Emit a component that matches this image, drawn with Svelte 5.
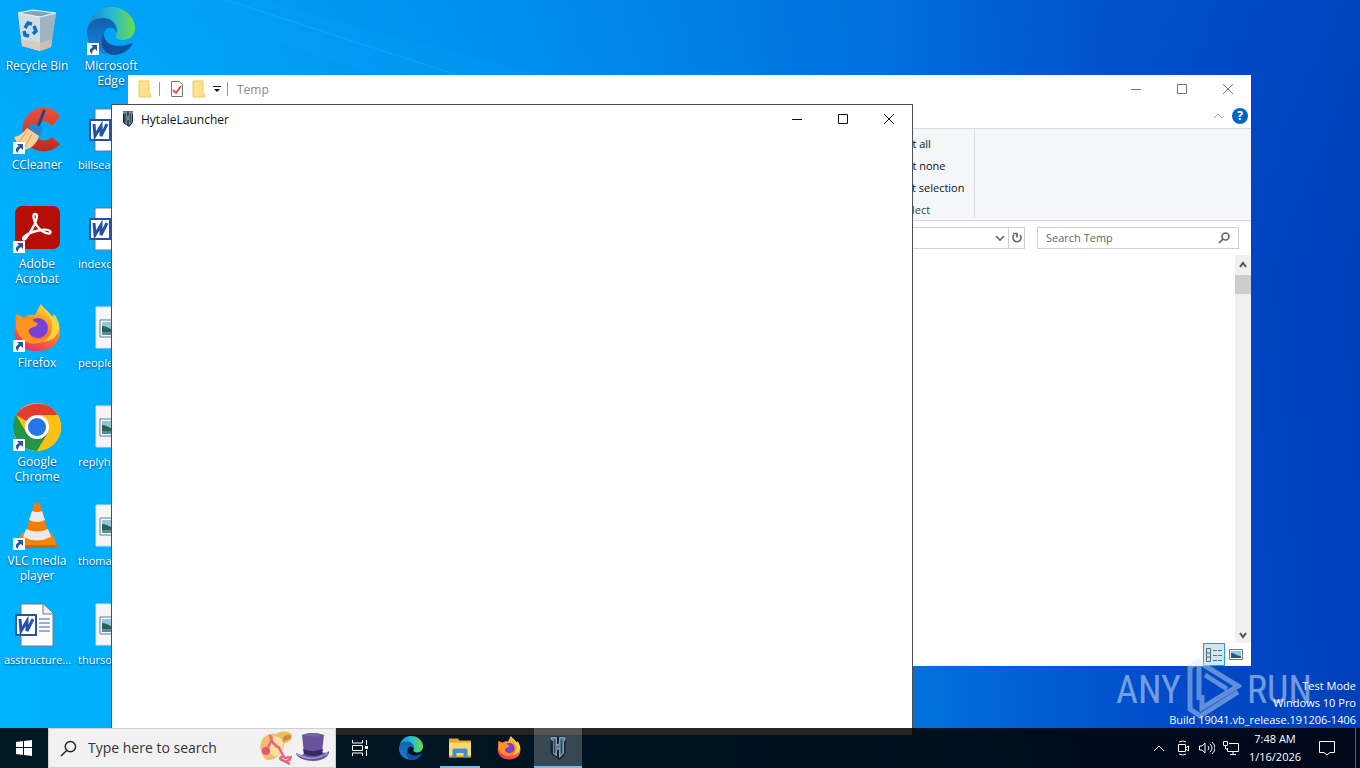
<script>
	const icons = [
		{ name: 'Recycle Bin', kind: 'bin' },
		{ name: 'CCleaner', kind: 'ccleaner', shortcut: true },
		{ name: 'Adobe Acrobat', kind: 'acrobat', shortcut: true },
		{ name: 'Firefox', kind: 'firefox', shortcut: true },
		{ name: 'Google Chrome', kind: 'chrome', shortcut: true },
		{ name: 'VLC media player', kind: 'vlc', shortcut: true },
		{ name: 'asstructure...', kind: 'word', file: true },
		{ name: 'Microsoft Edge', kind: 'edge', shortcut: true },
		{ name: 'billsea', kind: 'word', file: true },
		{ name: 'indexc', kind: 'word', file: true },
		{ name: 'people', kind: 'image', file: true },
		{ name: 'replyh', kind: 'image', file: true },
		{ name: 'thoma', kind: 'image', file: true },
		{ name: 'thurso', kind: 'image', file: true }
	]

	const tasks = [
		{ name: 'Microsoft Edge', kind: 'edge' },
		{ name: 'File Explorer', kind: 'explorer', open: true },
		{ name: 'Firefox', kind: 'firefox' },
		{ name: 'HytaleLauncher', kind: 'hytale', open: true, active: true }
	]

	let query = $state('')
	let folderQuery = $state('')
</script>

{#snippet art(kind)}
	<svg class="art" viewBox="0 0 48 48" aria-hidden="true">
		{#if kind === 'bin'}
			<path d="M5 6 20 3 43 6 38 40 27 44 9 39z" fill="#a9cde0" />
			<path d="M5 6 27 10 27 44 9 39z" fill="#cfdde6" />
			<path d="M27 10 43 6 38 40 27 44z" fill="#9fb4c1" />
			<path d="M5 6 20 3 43 6 27 10z" fill="#7fa5bb" stroke="#edf6fa" stroke-width="1.2" />
			<path d="M8 32 27 36 39 32 38 40 27 44 9 39z" fill="#dcc3b2" opacity=".7" />
			<g fill="none" stroke="#0c72c4" stroke-width="3.5">
				<path d="m12 21 3-5 4 1" />
				<path d="m21 19 2 5-3 3" />
				<path d="m16 29-4-1-1-4" />
			</g>
		{:else if kind === 'edge'}
			<path d="M1 21C3 8 12 0 24 0c14 0 24 10 24 21 0 7-5 12-12 12-5 0-8-2-7-5 3-5-1-12-8-14C13 11 5 15 1 21z" fill="url(#edge-top)" />
			<path d="M0 25c0-10 8-14 16-14 9 0 15 7 14 15-3-7-11-7-13 0-2 8 4 17 16 20C19 51 0 43 0 25z" fill="url(#edge-left)" />
			<path d="M17 26c-1 11 12 17 28 10 1 0 1 1 0 2-4 6-11 10-19 10-12-2-14-14-9-22z" fill="#12509f" />
		{:else if kind === 'ccleaner'}
			<path d="M47 11 39 20c-5-6-12-6-15 0-4 7-1 13 4 14 5 1 8 0 11-3l8 7C39 47 24 48 15 39 5 28 9 9 23 3c9-4 19-1 24 8z" fill="url(#cc-red)" />
			<path d="m25 21 6-16" stroke="#174d87" stroke-width="3" stroke-linecap="round" />
			<path d="m15 21 4-4 10 4-1 7-3 4z" fill="#2d82c8" />
			<path d="M14 22 26 30c-3 10-10 14-18 14L1 31c6-1 9-4 13-9z" fill="#f5d199" />
			<path d="M14 25 6 36M19 28l-7 13" stroke="#d3a05f" />
		{:else if kind === 'acrobat'}
			<rect x="2" y="1" width="45" height="43" rx="7" fill="#b60d05" />
			<path d="M22 9c-4 0 0 12 7 17 6 4 10 3 8 0-3-3-19 0-25 5-4 3-1 5 1 2 5-6 11-17 11-22 0-1-1-2-2-2z" fill="none" stroke="#fff" stroke-width="2.3" />
		{:else if kind === 'firefox'}
			<path d="M3 10c3 1 5 2 7 4 4-3 8-4 12-3 2-3 3-7 6-11 2 5 7 6 10 11 9 7 11 17 7 25-4 8-12 11-21 11C9 47-1 36 2 22c1-4 0-7 1-12z" fill="url(#fox)" />
			<circle cx="25" cy="24" r="10" fill="#7541d9" />
			<path d="M4 11c3 0 6 2 8 4 3-2 7 0 10 3 4 1 3 4-1 5-5 1-7 4-4 8 4 6 13 5 18 1-4 9-24 13-31-5-2-6-1-11 0-16z" fill="#ff9420" />
			<path d="M28 0c2 8 10 10 11 20 1 9-4 15-9 18 14-1 20-14 14-23-1-3-2-4-4-5 0 2 0 3-1 4-3-7-9-9-11-14z" fill="#ffdf3d" opacity=".85" />
		{:else if kind === 'chrome'}
			<circle cx="24" cy="24" r="24" fill="#fbc116" />
			<path d="M24 24 3 12C11-1 36-5 45 13z" fill="#e33b2e" />
			<path d="M3 12C-5 27 4 47 24 48l11-18-22-1z" fill="#249447" />
			<path d="M24 12h21a24 24 0 0 1-21 36l11-18z" fill="#fbc116" />
			<circle cx="24" cy="24" r="12" fill="#fff" />
			<circle cx="24" cy="24" r="9" fill="#2375e8" />
		{:else if kind === 'vlc'}
			<path d="M9 31h30l5 13q0 2-3 2H4q-3 0-1-3z" fill="#f58700" />
			<path d="M3 43h41v3H3z" fill="#cd6500" />
			<path d="M21 2q3-3 6 0l10 35q-13 7-26 0z" fill="#f47b05" />
			<path d="m19 9-3 9q8 4 16 0l-3-9q-5 2-10 0zM13 27l-3 8q14 7 28 0l-3-8q-11 5-22 0z" fill="#eceae8" />
		{:else if kind === 'word'}
			<path d="M8 3h22l10 9v33H8z" fill="#fff" stroke="#777" />
			<path d="M30 3v10h10" fill="#eee" stroke="#777" />
			<path d="M26 18h11M26 22h11M26 26h11M26 30h11" stroke="#2863b7" />
			<path d="M3 14h20v20H3z" fill="#fff" stroke="#2452a9" stroke-width="2" />
			<path d="m7 18 1 12 6-10v10l6-12" fill="none" stroke="#2452a9" stroke-width="3" />
		{:else if kind === 'image'}
			<path d="M9 3h32v41H9z" fill="#f5f5f5" stroke="#dedede" />
			<path d="M13 16h24v17H13z" fill="#fff" stroke="#547b9a" />
			<path d="M15 18h20v13H15z" fill="#91c6df" />
			<path d="M15 22c6 0 8 5 20 5v4H15z" fill="#315f51" />
			<path d="M15 28h20v3H15z" fill="#548da6" />
		{:else if kind === 'explorer'}
			<path d="M2 5h18l3 4h23v34H2z" fill="#e5a72c" />
			<path d="M2 13h44v26H2z" fill="#ffd969" />
			<path d="M9 43V28q0-3 3-3h24q3 0 3 3v15h-8v-9H17v9z" fill="#3d91cc" />
		{:else if kind === 'hytale'}
			<path d="M9 1h30v32l-4 7-8 8-7-5-8-5-3-5z" fill="#142333" />
			<path d="M10 3h11v15l6-3V3h11v5l-3 3v23l-8 9V25l-6 3v12l-6-5V10l-5-3z" fill="#66829a" stroke="#a5bac7" stroke-width="1.5" />
			<path d="M17 7v27M31 7v28" stroke="#2f485e" stroke-width="3" />
		{/if}
	</svg>
{/snippet}

{#snippet controls()}
	<div class="controls">
		<button aria-label="Minimize"><svg viewBox="0 0 12 12"><path d="M1 6.5h10" /></svg></button>
		<button aria-label="Maximize"><svg viewBox="0 0 12 12"><path d="M1.5 1.5h9v9h-9z" /></svg></button>
		<button aria-label="Close"><svg viewBox="0 0 12 12"><path d="m1 1 10 10M11 1 1 11" /></svg></button>
	</div>
{/snippet}

<svg class="defs" aria-hidden="true">
	<defs>
		<linearGradient id="edge-top"><stop stop-color="#1788cf" /><stop offset=".5" stop-color="#28b9d2" /><stop offset="1" stop-color="#6cdc47" /></linearGradient>
		<linearGradient id="edge-left" x2="0" y2="1"><stop stop-color="#125fae" /><stop offset="1" stop-color="#1785dc" /></linearGradient>
		<linearGradient id="fox" x1=".8" y1="0" x2=".3" y2="1"><stop stop-color="#ffe23e" /><stop offset=".45" stop-color="#ff8a22" /><stop offset="1" stop-color="#f02b67" /></linearGradient>
		<linearGradient id="cc-red" x2="0" y2="1"><stop stop-color="#ed5139" /><stop offset="1" stop-color="#bd2a1f" /></linearGradient>
	</defs>
</svg>

<div class="screen">
	<svg class="ray" viewBox="0 0 500 100" aria-hidden="true"><path d="M0-30 500 100H300L0-8z" fill="#08a8ff" opacity=".16" /><path d="m0-28 320 104" stroke="#4bc5ff" opacity=".25" /></svg>

	<main class="desktop">
		<div class="icons">
			{#each icons as icon}
				<button class="icon" class:file={icon.file}>
					<span class="picture">
						{@render art(icon.kind)}
						{#if icon.shortcut}
							<svg class="arrow" viewBox="0 0 12 12" aria-hidden="true"><path d="M0 0h12v12H0z" fill="#fff" /><path d="M4 2h6v6L8 6c-2 1-3 2-3 5-3-2-3-5 1-7z" fill="#26569b" /></svg>
						{/if}
					</span>
					<span class="label">{icon.name}</span>
				</button>
			{/each}
		</div>

		<section class="window explorer" aria-label="Temp">
			<header class="titlebar">
				<div class="quick">
					<svg class="folder" viewBox="0 0 16 18"><path d="M2 1h10v12l2 2v2H2z" fill="#ffe28a" stroke="#ecc960" /></svg>
					<i></i>
					<svg class="check" viewBox="0 0 16 18"><path d="M2.5 1.5h8l3 3v12h-11z" fill="#fff" stroke="#777" /><path d="m4 10 3 3 5-7" fill="none" stroke="#d75b42" stroke-width="2" /></svg>
					<svg class="folder" viewBox="0 0 16 18"><path d="M2 1h10v12l2 2v2H2z" fill="#ffe28a" stroke="#ecc960" /></svg>
					<svg class="drop" viewBox="0 0 8 8"><path d="M0 1.5h8" stroke="#111" /><path d="M1 4h6L4 7z" fill="#111" /></svg>
					<i></i>
					<span>Temp</span>
				</div>
				{@render controls()}
			</header>
			<div class="tabs">
				<svg class="collapse" viewBox="0 0 10 8"><path d="m1 6 4-4 4 4" /></svg>
				<button class="help" aria-label="Help">?</button>
			</div>
			<div class="ribbon">
				<div class="group">
					<button>Select all</button>
					<button>Select none</button>
					<button>Invert selection</button>
					<span>Select</span>
				</div>
			</div>
			<div class="address">
				<div class="path">
					<button aria-label="Previous locations"><svg viewBox="0 0 12 12"><path d="m2 4 4 4 4-4" /></svg></button>
					<button class="refresh" aria-label="Refresh"><svg viewBox="0 0 12 12"><path d="M9 3a4 4 0 1 1-6 0M2 1.5h4v4" /></svg></button>
				</div>
				<label class="find">
					<input type="text" placeholder="Search Temp" aria-label="Search Temp" bind:value={folderQuery} />
					<svg viewBox="0 0 12 12"><circle cx="7.5" cy="4.5" r="3.5" /><path d="M5 7 1 11" /></svg>
				</label>
			</div>
			<div class="files">
				<div class="scroll">
					<svg viewBox="0 0 10 8"><path d="m2 6 3-4 3 4" /></svg>
					<b></b>
					<svg viewBox="0 0 10 8"><path d="m2 2 3 4 3-4" /></svg>
				</div>
			</div>
			<footer class="views">
				<button class="on" aria-label="Details"><svg viewBox="0 0 18 16"><path d="M1.5 1.5h4v13h-4zM1.5 6h4M1.5 10h4M8 3.5h4M13 3.5h4M8 8.5h4M13 8.5h4M8 13.5h4M13 13.5h4" fill="none" stroke="#5b6770" /></svg></button>
				<button aria-label="Large icons"><svg viewBox="0 0 18 16"><path d="M2.5 2.5h13v10h-13z" fill="#fff" stroke="#777" /><path d="M4 4h10v7H4z" fill="#8ccbe8" /><path d="M4 6c4 0 5 3 10 3v2H4z" fill="#28577a" /></svg></button>
			</footer>
		</section>

		<section class="window launcher" aria-label="HytaleLauncher">
			<header class="titlebar">
				<div class="name">{@render art('hytale')}<span>HytaleLauncher</span></div>
				{@render controls()}
			</header>
		</section>

		<div class="build">
			<p>Test Mode</p>
			<p>Windows 10 Pro</p>
			<p>Build 19041.vb_release.191206-1406</p>
		</div>

		<div class="watermark">
			<span>ANY</span>
			<svg viewBox="0 0 56 64" aria-hidden="true"><path d="M11 5 4 9v42l10 7 38-24M13 42V4l39 24-36 22V37M19 17l22 14" /></svg>
			<span>RUN</span>
		</div>
	</main>

	<footer class="taskbar">
		<button class="start" aria-label="Start"><svg viewBox="0 0 16 16"><path d="m0 2 7-1v6H0zM8 1l8-1v7H8zM0 8h7v7l-7-1zM8 8h8v8l-8-1z" fill="#fff" /></svg></button>
		<label class="search">
			<svg class="lens" viewBox="0 0 18 18"><circle cx="11" cy="7" r="5.5" /><path d="m7 11-6 6" /></svg>
			<input type="text" placeholder="Type here to search" aria-label="Type here to search" bind:value={query} />
			<svg class="hats" viewBox="0 0 72 34" aria-hidden="true">
				<path d="M3 23C-2 12 5 1 17 3c5-4 17-3 16 3-1 5-5 5-8 7 0 9-9 17-17 16-2-1-4-3-5-6z" fill="#edbd69" />
				<path d="M9 14C10 4 18 3 23 9c3 4 1 12-6 17-5-1-8-5-8-12z" fill="#ffdfa0" />
				<path d="M24 7c2-4 8-4 8-1-2 4-6 3-8 5z" fill="#c98d3e" />
				<path d="M11 4c1 7 5 11 10 13M13 6c-1 5-3 9-5 12M20 17l5 9M25 26c-4-1-5 2-2 3l8 4M25 27l8-1M26 31l6-3" fill="none" stroke="#e8667c" stroke-width="2.5" />
				<circle cx="7" cy="20" r="4" fill="#e95568" />
				<path d="M37 22c4 3 8 2 8 0L43 4q10-4 22 0l-2 17c3 2 6 0 7-1 1 4-5 10-16 10-9 0-17-4-17-8z" fill="#68529c" />
				<path d="M43 4q10-4 22 0-10 3-22 0z" fill="#7563a2" />
				<path d="m44 18 1 5q10 4 18 0l1-5q-10 4-20 0z" fill="#352b62" />
				<path d="M38 23q16 9 31-1" fill="none" stroke="#aa98d0" stroke-width="1.5" />
			</svg>
		</label>
		<div class="tasks">
			<button class="overview" aria-label="Task View"><svg class="view" viewBox="0 0 18 18"><path d="M1.5 1v3h10V1M1.5 17v-3h10v3M1.5 6.5h10v5h-10zM15.5 1v5M15.5 11v6" fill="none" stroke="#fff" /><path d="M14 7h3v3h-3z" fill="#fff" /></svg></button>
			{#each tasks as task}
				<button class:open={task.open} class:active={task.active} aria-label={task.name}>{@render art(task.kind)}</button>
			{/each}
		</div>
		<div class="tray">
			<button aria-label="Show hidden icons"><svg viewBox="0 0 16 16"><path d="m3 11 5-5 5 5" /></svg></button>
			<button aria-label="Meet Now"><svg viewBox="0 0 16 16"><path d="M3.5 4.5h7v7h-7zM10.5 8l3-2v5l-3-2M4 2q4-2 7 0M4 14q4 2 7 0" /></svg></button>
			<button aria-label="Speakers"><svg viewBox="0 0 16 16"><path d="M.5 6H3l3-3v10l-3-3H.5zM9 6q2 2 0 4M11 4q4 4 0 8M13 2q6 6 0 12" /></svg></button>
			<button aria-label="Network"><svg viewBox="0 0 16 16"><path d="M6 3.5h9.5v8H4.5V8M10 12v3M7 14.5h6M.5 1.5h4v4h-4zM2.5 6v3h2" /></svg></button>
			<time class="clock"><span>7:48 AM</span><span>1/16/2026</span></time>
			<button class="notes" aria-label="Notifications"><svg viewBox="0 0 16 16"><path d="M.5 1.5h15v11H11L8 15l-3-2.5H.5z" /></svg></button>
			<button class="peek" aria-label="Show desktop"></button>
		</div>
	</footer>
</div>

<style>
	:global(body) {
		margin: 0;
	}

	.screen {
		position: relative;
		display: flex;
		flex-direction: column;
		min-height: 100vh;
		overflow: hidden;
		font: 12px/15px 'Open Sans', 'Noto Sans', sans-serif;
		color: #111;
		background:
			linear-gradient(180deg, rgba(0, 110, 220, .16), transparent 35%),
			linear-gradient(86deg, #00b4ff 0%, #00a9fb 18%, #008eec 45%, #0070dc 66%, #004cca 82%, #003db8 100%);
	}

	button {
		display: flex;
		align-items: center;
		justify-content: center;
		padding: 0;
		border: 0;
		background: none;
		color: inherit;
		font: inherit;
	}

	input {
		min-width: 0;
		height: 20px;
		flex: 1;
		padding: 0;
		border: 0;
		outline: 0;
		background: none;
		font: inherit;
		line-height: 20px;
	}

	svg {
		display: block;
		flex: none;
	}

	.defs {
		position: absolute;
		width: 0;
		height: 0;
	}

	.ray {
		position: absolute;
		top: 0;
		left: 140px;
		width: 500px;
	}

	.desktop {
		position: relative;
		flex: 1;
	}

	.icons {
		display: grid;
		grid-auto-flow: column;
		grid-template-rows: repeat(7, 99px);
		grid-auto-columns: 74px;
		justify-content: start;
		padding-top: 7px;
	}

	.icon {
		flex-direction: column;
		justify-content: flex-start;
		gap: 3px;
		color: #fff;
		text-shadow: 0 1px 2px rgba(0, 30, 70, .8);
	}

	.file .label {
		align-self: flex-start;
		margin-left: 4px;
		font-size: 11px;
	}

	.picture {
		position: relative;
		width: 48px;
		height: 48px;
	}

	.art {
		width: 100%;
		height: 100%;
	}

	.arrow {
		position: absolute;
		left: 0;
		bottom: 0;
		width: 12px;
		height: 12px;
	}

	.window {
		position: absolute;
		display: flex;
		flex-direction: column;
		background: #fff;
	}

	.explorer {
		left: 128px;
		top: 75px;
		width: 1123px;
		height: 591px;
	}

	.launcher {
		left: 111px;
		top: 104px;
		width: 800px;
		height: 630px;
		border: 1px solid #4b4f52;
	}

	.titlebar {
		display: flex;
		justify-content: space-between;
		height: 28px;
	}

	.controls {
		display: flex;
	}

	.controls button {
		width: 46px;
	}

	.controls svg {
		width: 12px;
		height: 12px;
		fill: none;
		stroke: #111;
	}

	.explorer .controls svg {
		stroke: #777;
	}

	.name {
		display: flex;
		align-items: center;
		gap: 5px;
		padding-left: 8px;
	}

	.name .art {
		width: 16px;
		height: 16px;
	}

	.quick {
		display: flex;
		align-items: center;
		gap: 6px;
		padding-left: 9px;
		color: #888;
	}

	.quick i {
		width: 1px;
		height: 14px;
		margin-right: 3px;
		background: #999;
	}

	.folder,
	.check {
		width: 16px;
		height: 18px;
	}

	.drop {
		width: 8px;
		height: 8px;
	}

	.tabs {
		display: flex;
		align-items: center;
		justify-content: flex-end;
		gap: 9px;
		height: 25px;
		padding-right: 3px;
		border-bottom: 1px solid #d8dadc;
	}

	.collapse {
		width: 10px;
		height: 8px;
		fill: none;
		stroke: #999;
	}

	.help {
		width: 16px;
		height: 16px;
		border-radius: 50%;
		background: #0067c0;
		color: #fff;
		font-weight: 700;
	}

	.ribbon {
		height: 91px;
		border-bottom: 1px solid #d8dadc;
		background: #f4f6f9;
	}

	.group {
		box-sizing: border-box;
		display: flex;
		flex-direction: column;
		align-items: flex-start;
		gap: 7px;
		width: 847px;
		height: 89px;
		padding: 7px 0 0 728px;
		border-right: 1px solid #dcdee0;
		font-size: 11px;
		white-space: nowrap;
	}

	.group button {
		padding-left: 30px;
	}

	.group span {
		align-self: center;
		color: #444;
	}

	.address {
		display: flex;
		gap: 12px;
		padding: 6px 12px;
		color: #666;
		font-size: 11px;
	}

	.path {
		flex: 1;
		display: flex;
		justify-content: flex-end;
		border: 1px solid #d0d0d0;
	}

	.path button {
		width: 16px;
	}

	.address svg {
		width: 12px;
		height: 12px;
		fill: none;
		stroke: #666;
		stroke-width: 1.7;
	}

	.path .refresh {
		border-left: 1px solid #d0d0d0;
	}

	.find {
		box-sizing: border-box;
		display: flex;
		align-items: center;
		width: 202px;
		height: 22px;
		padding: 0 8px;
		border: 1px solid #d0d0d0;
	}

	.find input::placeholder {
		color: #666;
		opacity: 1;
	}

	.files {
		flex: 1;
		display: flex;
		justify-content: flex-end;
	}

	.scroll {
		display: flex;
		flex-direction: column;
		align-items: center;
		gap: 6px;
		width: 16px;
		padding: 6px 0 4px;
		background: #f0f0f0;
	}

	.scroll svg {
		width: 10px;
		height: 8px;
		fill: none;
		stroke: #505050;
		stroke-width: 2;
	}

	.scroll b {
		width: 16px;
		height: 19px;
		margin-bottom: auto;
		background: #cdcdcd;
	}

	.views {
		display: flex;
		justify-content: flex-end;
		padding-right: 4px;
	}

	.views button {
		width: 22px;
		height: 23px;
	}

	.views svg {
		width: 18px;
		height: 16px;
	}

	.views .on {
		box-sizing: border-box;
		border: 1px solid #26a0da;
		background: #cbe8f6;
	}

	.build {
		position: absolute;
		right: 4px;
		bottom: 0;
		color: #fff;
		font-size: 11px;
		line-height: 17px;
		text-align: right;
	}

	.build p {
		margin: 0;
	}

	.watermark {
		position: absolute;
		right: 48px;
		bottom: 6px;
		display: flex;
		align-items: center;
		gap: 5px;
		color: #fff;
		font: 400 38px/60px 'Roboto Condensed', 'Open Sans Condensed', 'Liberation Sans Narrow', sans-serif;
		opacity: .45;
	}

	.watermark svg {
		width: 56px;
		height: 64px;
		fill: none;
		stroke: #d5e3f3;
		stroke-width: 5;
	}

	.taskbar {
		position: relative;
		display: flex;
		height: 40px;
		background: rgba(0, 0, 0, .86);
		color: #fff;
	}

	.start {
		width: 48px;
	}

	.start svg {
		width: 16px;
		height: 16px;
	}

	.search {
		box-sizing: border-box;
		display: flex;
		align-items: center;
		gap: 11px;
		width: 288px;
		padding: 0 4px 0 11px;
		border: 1px solid #d0d0d0;
		background: #f1f1f2;
		font-size: 14px;
	}

	.search input::placeholder {
		color: #333;
		opacity: 1;
	}

	.lens {
		width: 17px;
		height: 17px;
		fill: none;
		stroke: #222;
		stroke-width: 1.5;
	}

	.hats {
		width: 72px;
		height: 34px;
	}

	.tasks {
		display: flex;
		gap: 1px;
	}

	.tasks button {
		position: relative;
		width: 48px;
	}

	.tasks .overview {
		margin-right: 2px;
	}

	.tasks .art {
		width: 24px;
		height: 24px;
	}

	.tasks .view {
		width: 18px;
		height: 18px;
	}

	.tasks .open::after {
		content: '';
		position: absolute;
		left: 4px;
		right: 4px;
		bottom: 0;
		height: 2px;
		background: #76b9ed;
	}

	.tasks .active {
		background: rgba(255, 255, 255, .22);
	}

	.tasks .active::after {
		left: 0;
		right: 0;
	}

	.tray {
		display: flex;
		margin-left: auto;
	}

	.tray button {
		width: 24px;
	}

	.tray svg {
		width: 16px;
		height: 16px;
		fill: none;
		stroke: #fff;
	}

	.clock {
		display: flex;
		flex-direction: column;
		align-items: center;
		justify-content: center;
		width: 64px;
		font-size: 11px;
		line-height: 18px;
	}

	.tray .notes {
		width: 40px;
	}

	.tray .peek {
		width: 5px;
		margin-left: 8px;
		border-left: 1px solid #56616c;
	}
</style>
